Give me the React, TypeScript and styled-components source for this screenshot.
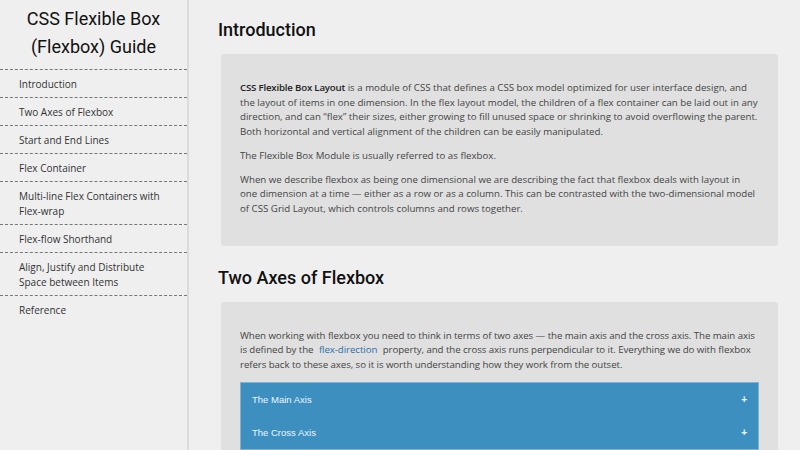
import styled, { createGlobalStyle } from 'styled-components';

const GlobalStyle = createGlobalStyle`
  html, body {
    margin: 0;
    padding: 0;
    background: #efefef;
    overflow: hidden;
  }
  * {
    box-sizing: border-box;
  }
`;

const navItems = [
  'Introduction',
  'Two Axes of Flexbox',
  'Start and End Lines',
  'Flex Container',
  'Multi-line Flex Containers with Flex-wrap',
  'Flex-flow Shorthand',
  'Align, Justify and Distribute Space between Items',
  'Reference',
];

export default function App() {
  return (
    <>
      <GlobalStyle />
      <Page>
        <Sidebar>
          <Title>CSS Flexible Box (Flexbox) Guide</Title>
          <Nav>
            {navItems.map((item) => (
              <NavLink key={item} href="#">
                {item}
              </NavLink>
            ))}
          </Nav>
        </Sidebar>

        <Main>
          <Heading>Introduction</Heading>
          <Card>
            <P>
              <strong>CSS Flexible Box Layout</strong> is a module of CSS that defines a CSS box model
              optimized for user interface design, and the layout of items in one dimension. In the flex
              layout model, the children of a flex container can be laid out in any direction, and can
              “flex” their sizes, either growing to fill unused space or shrinking to avoid overflowing
              the parent. Both horizontal and vertical alignment of the children can be easily
              manipulated.
            </P>
            <P>The Flexible Box Module is usually referred to as flexbox.</P>
            <P>
              When we describe flexbox as being one dimensional we are describing the fact that flexbox
              deals with layout in one dimension at a time — either as a row or as a column. This can be
              contrasted with the two-dimensional model of CSS Grid Layout, which controls columns and
              rows together.
            </P>
          </Card>

          <Heading>Two Axes of Flexbox</Heading>
          <Card>
            <P $tight>
              When working with flexbox you need to think in terms of two axes — the main axis and the
              cross axis. The main axis is defined by the <Code>flex-direction</Code> property, and the
              cross axis runs perpendicular to it. Everything we do with flexbox refers back to these
              axes, so it is worth understanding how they work from the outset.
            </P>
            <Accordion>
              <AccordionRow>
                <span>The Main Axis</span>
                <Plus>+</Plus>
              </AccordionRow>
              <AccordionRow>
                <span>The Cross Axis</span>
                <Plus>+</Plus>
              </AccordionRow>
            </Accordion>
          </Card>
        </Main>
      </Page>
    </>
  );
}

const Page = styled.div`
  display: flex;
  width: 800px;
  height: 450px;
  overflow: hidden;
  background: #efefef;
`;

const Sidebar = styled.aside`
  flex: 0 0 189px;
  border-right: 2px solid #dcdcdc;
  display: flex;
  flex-direction: column;
`;

const Title = styled.h1`
  margin: 0;
  padding: 5px 12px 8px;
  font-family: Roboto, 'Liberation Sans', sans-serif;
  font-weight: 400;
  font-size: 18px;
  line-height: 28px;
  color: #111;
  text-align: center;
  border-bottom: 1px dashed #777;
`;

const Nav = styled.nav`
  display: flex;
  flex-direction: column;
`;

const NavLink = styled.a`
  display: block;
  padding: 7px 19px 5px;
  font-family: 'Open Sans', 'Liberation Sans', sans-serif;
  font-size: 10px;
  line-height: 15px;
  color: #333;
  text-decoration: none;
  border-bottom: 1px dashed #777;

  &:last-child {
    border-bottom: none;
  }
`;

const Main = styled.main`
  flex: 1;
  padding: 16px 22px 0 29px;
  display: flex;
  flex-direction: column;
`;

const Heading = styled.h2`
  margin: 0 0 10px;
  font-family: Roboto, 'Liberation Sans', sans-serif;
  font-weight: 500;
  font-size: 18px;
  line-height: 28px;
  color: #111;
`;

const Card = styled.section`
  margin: 0 0 18px 3px;
  padding: 27px 19px 20px;
  background: #e0e0e0;
  border-radius: 3px;
`;

const P = styled.p<{ $tight?: boolean }>`
  margin: 0 0 9.5px;
  font-family: 'Open Sans', 'Liberation Sans', sans-serif;
  font-size: 9.7px;
  line-height: 14.5px;
  color: #444;
  letter-spacing: ${(p) => (p.$tight ? '-0.07px' : 'normal')};

  strong {
    color: #222;
    font-weight: 600;
    letter-spacing: -0.2px;
  }
`;

const Code = styled.code`
  font-family: 'Open Sans', 'Liberation Sans', sans-serif;
  color: #2b6ea8;
  padding: 0 3px;
`;

const Accordion = styled.div`
  margin-top: 7px;
  background: #3d8fc0;
  border: 1px solid #7fb3d6;
`;

const AccordionRow = styled.div`
  display: flex;
  align-items: center;
  justify-content: space-between;
  height: 33px;
  padding: 0 11px;
  font-family: 'Liberation Sans', Arial, sans-serif;
  font-size: 9.5px;
  color: #eef6ff;
`;

const Plus = styled.span`
  font-size: 10px;
  font-weight: 700;
  color: #eef6ff;
`;
